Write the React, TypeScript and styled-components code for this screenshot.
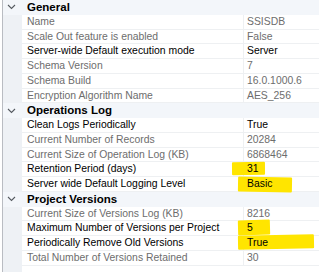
import styled, { createGlobalStyle } from 'styled-components';

const Global = createGlobalStyle`
  html, body {
    margin: 0;
    padding: 0;
    background: #ffffff;
  }
  body {
    font-family: "Liberation Sans", Arial, sans-serif;
  }
`;

interface Prop {
  label: string;
  value: string;
  editable?: boolean;
  mark?: { left: number; top: number; width: number; height: number; rotate: number };
}

interface Category {
  title: string;
  props: Prop[];
}

const categories: Category[] = [
  {
    title: 'General',
    props: [
      { label: 'Name', value: 'SSISDB' },
      { label: 'Scale Out feature is enabled', value: 'False' },
      { label: 'Server-wide Default execution mode', value: 'Server', editable: true },
      { label: 'Schema Version', value: '7' },
      { label: 'Schema Build', value: '16.0.1000.6' },
      { label: 'Encryption Algorithm Name', value: 'AES_256' },
    ],
  },
  {
    title: 'Operations Log',
    props: [
      { label: 'Clean Logs Periodically', value: 'True', editable: true },
      { label: 'Current Number of Records', value: '20284' },
      { label: 'Current Size of Operation Log (KB)', value: '6868464' },
      {
        label: 'Retention Period (days)',
        value: '31',
        editable: true,
        mark: { left: -12, top: 0, width: 33, height: 13, rotate: -0.5 },
      },
      {
        label: 'Server wide Default Logging Level',
        value: 'Basic',
        editable: true,
        mark: { left: -6, top: 0, width: 54, height: 15, rotate: 1 },
      },
    ],
  },
  {
    title: 'Project Versions',
    props: [
      { label: 'Current Size of Versions Log (KB)', value: '8216' },
      {
        label: 'Maximum Number of Versions per Project',
        value: '5',
        editable: true,
        mark: { left: -6, top: -1, width: 32, height: 15, rotate: -1.5 },
      },
      {
        label: 'Periodically Remove Old Versions',
        value: 'True',
        editable: true,
        mark: { left: -6, top: -1, width: 76, height: 14, rotate: -1 },
      },
      { label: 'Total Number of Versions Retained', value: '30' },
    ],
  },
];

const ROW = 14.75;

const Grid = styled.div`
  margin-left: 2px;
  border-left: 1px solid #b9bcc2;
  min-height: 272px;
  background: linear-gradient(to right, #eef1f5 0, #eef1f5 19px, #ffffff 19px);
  font-size: 10.4px;
  overflow: hidden;
`;

const CategoryRow = styled.div`
  display: flex;
  align-items: center;
  height: ${ROW}px;
  background: #f3f6fa;
  font-weight: bold;
  font-size: 11.5px;
  color: #000000;
`;

const Chevron = styled.div`
  width: 19px;
  height: ${ROW}px;
  display: flex;
  align-items: center;
  justify-content: center;
  padding-right: 2px;
  box-sizing: border-box;
`;

const Title = styled.div`
  padding-left: 5px;
  line-height: ${ROW}px;
`;

const PropRow = styled.div`
  display: grid;
  grid-template-columns: 19px 221px 1fr;
  height: ${ROW}px;
`;

const Gutter = styled.div`
  background: #eef1f5;
`;

const Cell = styled.div<{ $editable?: boolean }>`
  position: relative;
  line-height: 14px;
  height: ${ROW}px;
  box-sizing: border-box;
  border-bottom: 1px solid #eef0f2;
  padding-left: 5px;
  white-space: nowrap;
  overflow: hidden;
  color: ${(p) => (p.$editable ? '#000000' : '#6d6d6d')};
  background: #ffffff;
`;

const ValueCell = styled(Cell)`
  border-left: 1px solid #eef0f2;
  padding-left: 3px;
  overflow: visible;
`;

const Mark = styled.span`
  position: absolute;
  background: #ffe500;
  border-radius: 1px;
`;

const Text = styled.span`
  position: relative;
`;

const Arrow = () => (
  <svg width="9" height="6" viewBox="0 0 9 6">
    <polyline points="1,1 4.5,4.5 8,1" fill="none" stroke="#555a60" strokeWidth="1.1" />
  </svg>
);

export default function App() {
  return (
    <>
      <Global />
      <Grid>
        {categories.map((c) => (
          <div key={c.title}>
            <CategoryRow>
              <Chevron>
                <Arrow />
              </Chevron>
              <Title>{c.title}</Title>
            </CategoryRow>
            {c.props.map((p) => (
              <PropRow key={p.label}>
                <Gutter />
                <Cell $editable={p.editable}>{p.label}</Cell>
                <ValueCell $editable={p.editable}>
                  {p.mark && (
                    <Mark
                      style={{
                        left: p.mark.left,
                        top: p.mark.top,
                        width: p.mark.width,
                        height: p.mark.height,
                        transform: `rotate(${p.mark.rotate}deg)`,
                      }}
                    />
                  )}
                  <Text>{p.value}</Text>
                </ValueCell>
              </PropRow>
            ))}
          </div>
        ))}
      </Grid>
    </>
  );
}
